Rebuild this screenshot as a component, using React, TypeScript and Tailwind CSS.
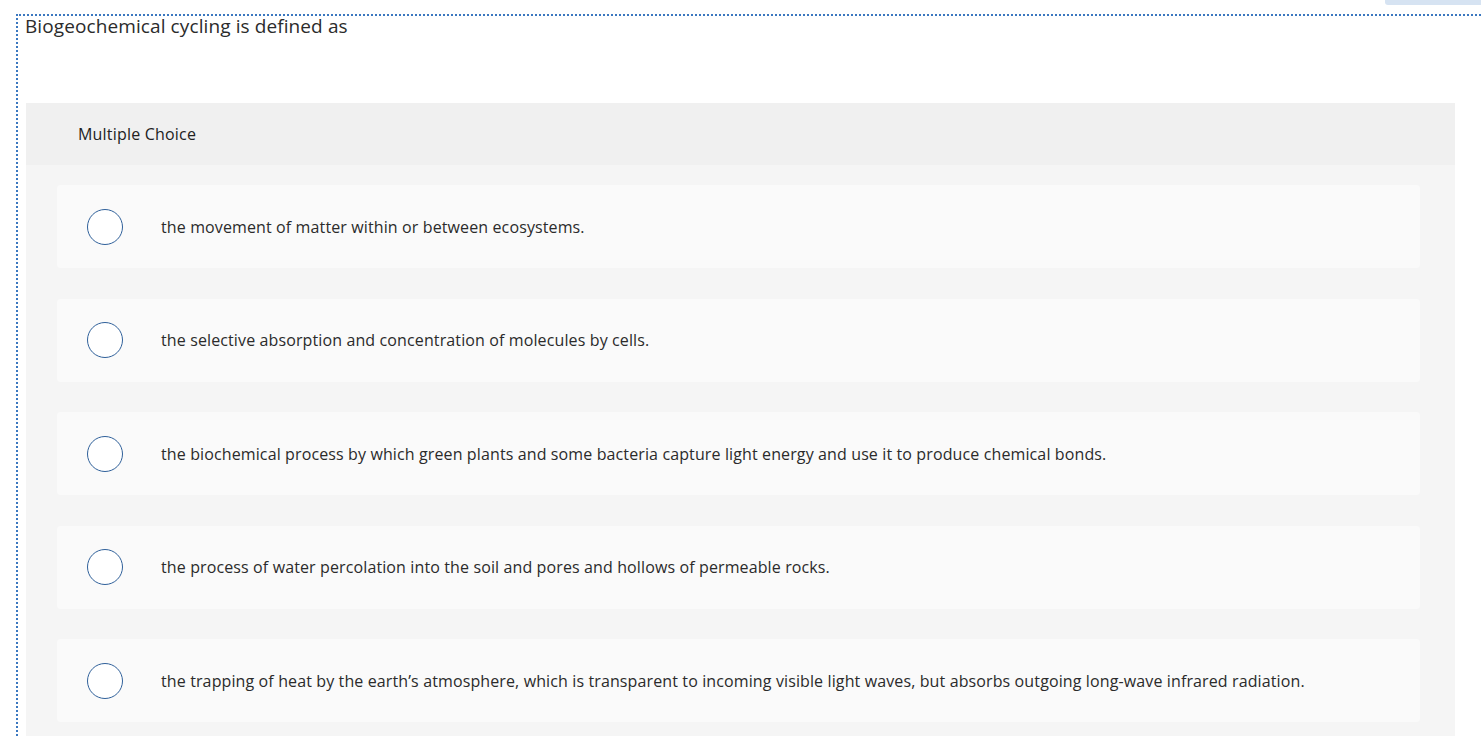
const options = [
  'the movement of matter within or between ecosystems.',
  'the selective absorption and concentration of molecules by cells.',
  'the biochemical process by which green plants and some bacteria capture light energy and use it to produce chemical bonds.',
  'the process of water percolation into the soil and pores and hollows of permeable rocks.',
  'the trapping of heat by the earth\u2019s atmosphere, which is transparent to incoming visible light waves, but absorbs outgoing long-wave infrared radiation.',
];

const Radio = () => (
  <span className="block h-[36px] w-[36px] shrink-0 rounded-full border-[1.5px] border-[#2f609a] bg-white" />
);

const App = () => {
  return (
    <div className="min-h-[736px] overflow-hidden bg-white font-['Open_Sans','Liberation_Sans',sans-serif] text-[#333]">
      <div className="flex h-[14px] justify-end">
        <div className="h-[5px] w-[96px] rounded-bl-[3px] bg-[#d6e3f2]" />
      </div>
      <div className="ml-[16px] min-h-[722px] border-l-2 border-t-2 border-dotted border-[#3b78c0]">
        <p className="pl-[7px] text-[19px] leading-[20px] tracking-[0.1px] text-[#2b2b2b]">Biogeochemical cycling is defined as</p>
        <div className="ml-[8px] mr-[26px] mt-[67px] bg-[#f5f5f5]">
          <div className="flex h-[62px] items-center bg-[#f0f0f0] pl-[52px] text-[16px] tracking-[0.2px] text-[#222]">Multiple Choice</div>
          <div className="flex flex-col gap-[30.5px] pb-[30px] pl-[31px] pr-[35px] pt-[20px]">
            {options.map((o) => (
              <div key={o} className="flex h-[83px] items-center rounded-[4px] bg-[#fafafa] pl-[30px]">
                <Radio />
                <span className="ml-[38px] text-[16px] tracking-[0.12px] text-[#2b2b2b]">{o}</span>
              </div>
            ))}
          </div>
        </div>
      </div>
    </div>
  );
};

export default App;
